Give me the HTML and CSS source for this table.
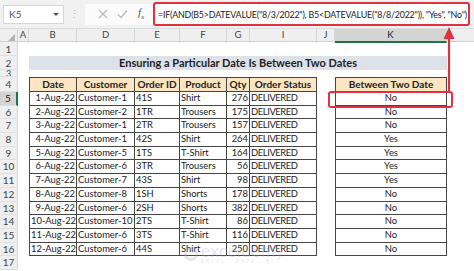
FILE: index.html
```html
<!DOCTYPE html>
<html>
<head>
<meta charset="utf-8">
<link rel="stylesheet" href="styles.css">
</head>
<body>
<div class="page">
  <div class="fbar">
    <div class="namebox"><span>K5</span><span class="dd"></span></div>
    <div class="sep">⋮</div>
    <div class="icons">
      <svg width="10" height="10" viewBox="0 0 10 10"><path d="M1 1L9 9M9 1L1 9" stroke="#b9b9b9" stroke-width="1.2"/></svg>
      <svg width="11" height="10" viewBox="0 0 11 10"><path d="M1 5.5L4 8.5L10 1.5" stroke="#b9b9b9" stroke-width="1.2" fill="none"/></svg>
      <span class="fx">f<sub>x</sub></span>
    </div>
    <div class="formula">=IF(AND(B5&gt;DATEVALUE("8/3/2022"), B5&lt;DATEVALUE("8/8/2022")), "Yes", "No")</div>
  </div>

  <div class="sheet">
    <div class="row colhdr">
      <div class="corner"><span class="tri"></span></div>
      <div class="ch">A</div><div class="ch">B</div><div class="ch">D</div><div class="ch">E</div><div class="ch">F</div><div class="ch">G</div><div class="ch">I</div><div class="ch">J</div><div class="ch sel">K</div><div class="ch last"></div>
    </div>
    <div class="row r1"><div class="rh">1</div></div>
    <div class="row r2"><div class="rh">2</div><div></div><div class="title">Ensuring a Particular Date Is Between Two Dates</div></div>
    <div class="row r3"><div class="rh">3</div></div>
    <div class="row r4">
      <div class="rh">4</div><div></div>
      <div class="t th tl">Date</div><div class="t th">Customer</div><div class="t th">Order ID</div><div class="t th">Product</div><div class="t th">Qty</div><div class="t th">Order Status</div>
      <div></div><div class="t th tl">Between Two Date</div>
    </div>
    <div class="row d"><div class="rh cur">5</div><div></div><div class="t tl r">1-Aug-22</div><div class="t">Customer-1</div><div class="t">41S</div><div class="t">Shirt</div><div class="t r">276</div><div class="t st">DELIVERED</div><div></div><div class="t tl c">No</div></div>
    <div class="row d"><div class="rh">6</div><div></div><div class="t tl r">2-Aug-22</div><div class="t">Customer-2</div><div class="t">1TR</div><div class="t">Trousers</div><div class="t r">175</div><div class="t st">DELIVERED</div><div></div><div class="t tl c">No</div></div>
    <div class="row d"><div class="rh">7</div><div></div><div class="t tl r">3-Aug-22</div><div class="t">Customer-1</div><div class="t">2TR</div><div class="t">Trousers</div><div class="t r">157</div><div class="t st">DELIVERED</div><div></div><div class="t tl c">No</div></div>
    <div class="row d"><div class="rh">8</div><div></div><div class="t tl r">4-Aug-22</div><div class="t">Customer-1</div><div class="t">42S</div><div class="t">Shirt</div><div class="t r">264</div><div class="t st">DELIVERED</div><div></div><div class="t tl c">Yes</div></div>
    <div class="row d"><div class="rh">9</div><div></div><div class="t tl r">5-Aug-22</div><div class="t">Customer-5</div><div class="t">1TS</div><div class="t">T-Shirt</div><div class="t r">164</div><div class="t st">DELIVERED</div><div></div><div class="t tl c">Yes</div></div>
    <div class="row d"><div class="rh">10</div><div></div><div class="t tl r">6-Aug-22</div><div class="t">Customer-6</div><div class="t">3TR</div><div class="t">Trousers</div><div class="t r">56</div><div class="t st">DELIVERED</div><div></div><div class="t tl c">Yes</div></div>
    <div class="row d"><div class="rh">11</div><div></div><div class="t tl r">7-Aug-22</div><div class="t">Customer-7</div><div class="t">43S</div><div class="t">Shirt</div><div class="t r">98</div><div class="t st">DELIVERED</div><div></div><div class="t tl c">Yes</div></div>
    <div class="row d"><div class="rh">12</div><div></div><div class="t tl r">8-Aug-22</div><div class="t">Customer-8</div><div class="t">1SH</div><div class="t">Shorts</div><div class="t r">178</div><div class="t st">DELIVERED</div><div></div><div class="t tl c">No</div></div>
    <div class="row d"><div class="rh">13</div><div></div><div class="t tl r">9-Aug-22</div><div class="t">Customer-6</div><div class="t">2SH</div><div class="t">Shorts</div><div class="t r">382</div><div class="t st">DELIVERED</div><div></div><div class="t tl c">No</div></div>
    <div class="row d"><div class="rh">14</div><div></div><div class="t tl r">10-Aug-22</div><div class="t">Customer-10</div><div class="t">2TS</div><div class="t">T-Shirt</div><div class="t r">86</div><div class="t st">DELIVERED</div><div></div><div class="t tl c">No</div></div>
    <div class="row d"><div class="rh">15</div><div></div><div class="t tl r">11-Aug-22</div><div class="t">Customer-6</div><div class="t">3TS</div><div class="t">T-Shirt</div><div class="t r">116</div><div class="t st">DELIVERED</div><div></div><div class="t tl c">No</div></div>
    <div class="row d"><div class="rh">16</div><div></div><div class="t tl r">12-Aug-22</div><div class="t">Customer-6</div><div class="t">44S</div><div class="t">Shirt</div><div class="t r">250</div><div class="t st">DELIVERED</div><div></div><div class="t tl c">No</div></div>
    <div class="row d"><div class="rh">17</div></div>
  </div>

  <div class="hl-box"></div>
  <svg class="arrow" width="14" height="66" viewBox="0 0 14 66"><path d="M7 10V66" stroke="#e0323e" stroke-width="2.2"/><path d="M7 0L12.5 12H1.5Z" fill="#e0323e"/></svg>
  <div class="wm"><span class="wm-logo"></span><span class="wm-t">exceldemy<small>EXCEL · DATA · BI</small></span></div>
</div>
</body>
</html>
```

FILE: styles.css
```css
* { box-sizing: border-box; }
html, body { margin: 0; padding: 0; }
body { width: 474px; height: 271px; overflow: hidden; background: #fff; font-family: Lato, "Liberation Sans", sans-serif; color: #222; }
.page { position: relative; width: 474px; height: 271px; overflow: hidden; }

.fbar { height: 29px; background: #f1f1f1; display: flex; align-items: center; padding: 0 4px 0 3px; border-bottom: 1px solid #dcdcdc; }
.namebox { width: 61px; height: 19px; background: #fff; border: 1px solid #d6d6d6; display: flex; align-items: center; justify-content: space-between; padding: 0 4px 0 5px; font-size: 10px; color: #555; }
.dd { width: 0; height: 0; border-left: 3px solid transparent; border-right: 3px solid transparent; border-top: 3px solid #555; }
.sep { width: 21px; text-align: center; color: #b8b8b8; font-size: 11px; }
.icons { width: 68px; height: 21px; background: #fbfbfb; display: flex; align-items: center; justify-content: space-around; padding: 0 4px 0 8px; }
.fx { font-family: "Liberation Serif", serif; font-style: italic; font-size: 11px; color: #555; }
.fx sub { font-size: 7px; }
.formula { flex: 1; height: 24px; background: #fff; border: 2px solid #e0323e; border-radius: 3px; font-size: 8.9px; letter-spacing: -0.2px; color: #222; display: flex; align-items: center; padding-left: 3px; white-space: nowrap; overflow: hidden; }

.row { display: grid; grid-template-columns: 18px 11px 48px 58px 45px 47px 23px 67px 18px 112px 27px; }
.colhdr { height: 13px; background: #efefef; border-bottom: 1px solid #d0d0d0; }
.corner { position: relative; border-right: 1px solid #d6d6d6; }
.tri { position: absolute; right: 2px; bottom: 2px; width: 0; height: 0; border-left: 7px solid transparent; border-bottom: 7px solid #b4b4b4; }
.ch { font-size: 9.5px; color: #444; text-align: center; line-height: 12px; border-right: 1px solid #d6d6d6; }
.ch.sel { background: #d4d4d4; border-bottom: 2px solid #217346; color: #222; }
.ch.last { border-right: none; }

.rh { background: #efefef; color: #444; font-size: 10px; text-align: center; border-right: 1px solid #d6d6d6; border-bottom: 1px solid #e0e0e0; overflow: hidden; }
.rh.cur { background: #d4d4d4; border-right: 2px solid #217346; color: #222; }
.r1 { height: 14px; }
.r1 .rh { line-height: 14px; }
.r2 { height: 14px; }
.r2 .rh { line-height: 14px; }
.r3 { height: 7px; }
.r3 .rh { line-height: 8px; font-size: 9px; }
.r4 { height: 15px; }
.r4 .rh { line-height: 15px; }
.d { height: 13.7px; }
.d .rh { line-height: 13.7px; }

.title { grid-column: 3 / 11; background: #dde1e8; font-weight: 700; font-size: 11px; text-align: center; line-height: 14px; color: #1e1e1e; }

.t { border-right: 1px solid #454545; border-bottom: 1px solid #454545; font-size: 9.4px; line-height: 12.7px; padding: 0 1px; white-space: nowrap; overflow: hidden; }
.tl { border-left: 1px solid #454545; }
.th { border-top: 1px solid #454545; background: #fbe5c2; font-weight: 700; text-align: center; font-size: 10px; line-height: 13px; }
.st { letter-spacing: -0.4px; }
.r { text-align: right; }
.c { text-align: center; }

.hl-box { position: absolute; left: 328px; top: 91px; width: 125px; height: 17px; border: 2px solid #e0323e; border-radius: 3px; }
.arrow { position: absolute; left: 442px; top: 27px; }

.wm { position: absolute; left: 184px; top: 243px; display: flex; align-items: center; gap: 3px; opacity: 0.3; pointer-events: none; }
.wm-logo { width: 14px; height: 14px; border-radius: 50%; border: 3px solid #9fb0c8; }
.wm-t { display: flex; flex-direction: column; font-size: 17px; line-height: 15px; color: #9fb0c8; letter-spacing: 0.5px; }
.wm-t small { font-size: 5px; line-height: 6px; letter-spacing: 2px; }
```
